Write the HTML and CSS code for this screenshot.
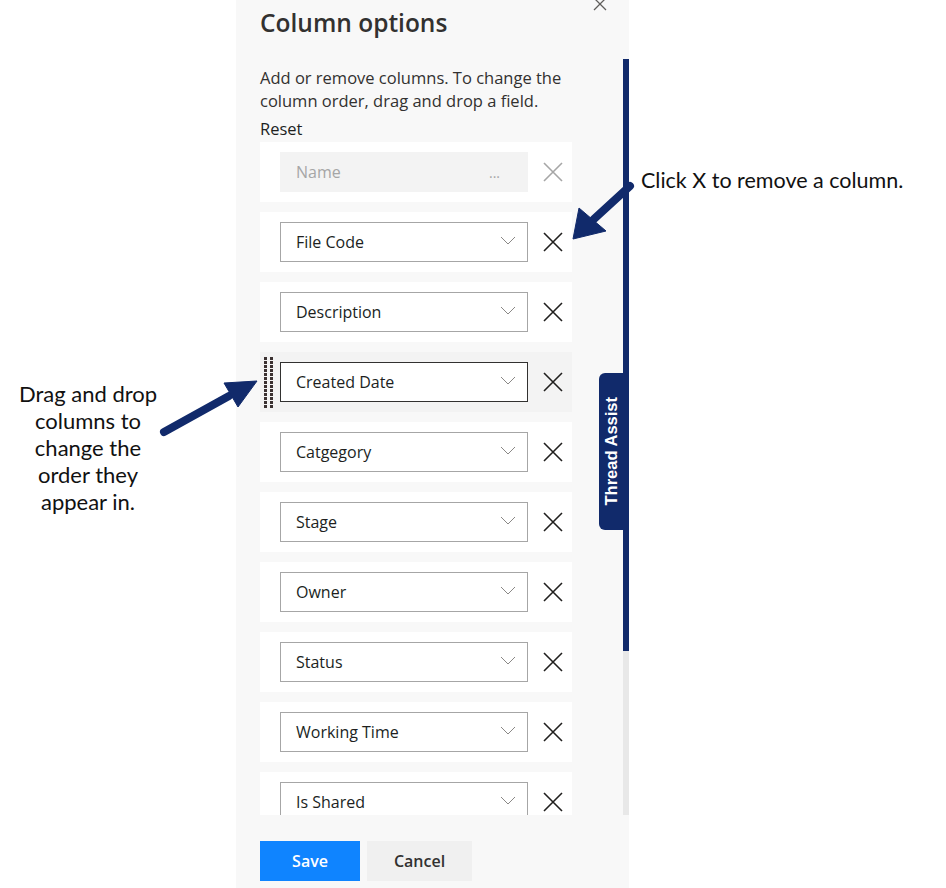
FILE: index.html
```html
<!DOCTYPE html>
<html lang="en">
<head>
    <meta charset="UTF-8">
    <title>Column options</title>
    <link rel="stylesheet" href="styles.css">
</head>
<body>
    <div class="page">
        <aside class="note note-left">
            <p>Drag and drop<br>columns to<br>change the<br>order they<br>appear in.</p>
        </aside>

        <section class="panel">
            <header class="panel-head">
                <h1>Column options</h1>
                <button class="close" aria-label="Close">
                    <svg width="14" height="14" viewBox="0 0 14 14"><path d="M1 1L13 13M13 1L1 13" stroke="#605e5c" stroke-width="1.3" fill="none"/></svg>
                </button>
            </header>

            <div class="panel-body">
                <div class="scroll-content">
                    <p class="intro">Add or remove columns. To change the<br>column order, drag and drop a field.</p>
                    <a class="reset" href="#">Reset</a>

                    <ul class="fields">
                        <li class="field locked">
                            <div class="select"><span>Name</span><span class="dots">...</span></div>
                            <button class="remove"><svg width="20" height="20" viewBox="0 0 20 20"><path d="M1 1L19 19M19 1L1 19" stroke="#a6a6a6" stroke-width="1.6" fill="none"/></svg></button>
                        </li>
                        <li class="field">
                            <div class="select"><span>File Code</span><svg class="chev" width="16" height="9" viewBox="0 0 16 9"><path d="M1 1L8 8L15 1" stroke="#8a8886" stroke-width="1" fill="none"/></svg></div>
                            <button class="remove"><svg width="20" height="20" viewBox="0 0 20 20"><path d="M1 1L19 19M19 1L1 19" stroke="#201f1e" stroke-width="1.6" fill="none"/></svg></button>
                        </li>
                        <li class="field">
                            <div class="select"><span>Description</span><svg class="chev" width="16" height="9" viewBox="0 0 16 9"><path d="M1 1L8 8L15 1" stroke="#8a8886" stroke-width="1" fill="none"/></svg></div>
                            <button class="remove"><svg width="20" height="20" viewBox="0 0 20 20"><path d="M1 1L19 19M19 1L1 19" stroke="#201f1e" stroke-width="1.6" fill="none"/></svg></button>
                        </li>
                        <li class="field dragging">
                            <svg class="grip" width="10" height="52" viewBox="0 0 10 52">
                                <defs>
                                    <pattern id="gripdots" width="6" height="4" patternUnits="userSpaceOnUse">
                                        <rect x="0" y="0" width="3" height="3" fill="#3b3131"/>
                                    </pattern>
                                </defs>
                                <rect width="9" height="52" fill="url(#gripdots)"/>
                            </svg>
                            <div class="select"><span>Created Date</span><svg class="chev" width="16" height="9" viewBox="0 0 16 9"><path d="M1 1L8 8L15 1" stroke="#8a8886" stroke-width="1" fill="none"/></svg></div>
                            <button class="remove"><svg width="20" height="20" viewBox="0 0 20 20"><path d="M1 1L19 19M19 1L1 19" stroke="#201f1e" stroke-width="1.6" fill="none"/></svg></button>
                        </li>
                        <li class="field">
                            <div class="select"><span>Catgegory</span><svg class="chev" width="16" height="9" viewBox="0 0 16 9"><path d="M1 1L8 8L15 1" stroke="#8a8886" stroke-width="1" fill="none"/></svg></div>
                            <button class="remove"><svg width="20" height="20" viewBox="0 0 20 20"><path d="M1 1L19 19M19 1L1 19" stroke="#201f1e" stroke-width="1.6" fill="none"/></svg></button>
                        </li>
                        <li class="field">
                            <div class="select"><span>Stage</span><svg class="chev" width="16" height="9" viewBox="0 0 16 9"><path d="M1 1L8 8L15 1" stroke="#8a8886" stroke-width="1" fill="none"/></svg></div>
                            <button class="remove"><svg width="20" height="20" viewBox="0 0 20 20"><path d="M1 1L19 19M19 1L1 19" stroke="#201f1e" stroke-width="1.6" fill="none"/></svg></button>
                        </li>
                        <li class="field">
                            <div class="select"><span>Owner</span><svg class="chev" width="16" height="9" viewBox="0 0 16 9"><path d="M1 1L8 8L15 1" stroke="#8a8886" stroke-width="1" fill="none"/></svg></div>
                            <button class="remove"><svg width="20" height="20" viewBox="0 0 20 20"><path d="M1 1L19 19M19 1L1 19" stroke="#201f1e" stroke-width="1.6" fill="none"/></svg></button>
                        </li>
                        <li class="field">
                            <div class="select"><span>Status</span><svg class="chev" width="16" height="9" viewBox="0 0 16 9"><path d="M1 1L8 8L15 1" stroke="#8a8886" stroke-width="1" fill="none"/></svg></div>
                            <button class="remove"><svg width="20" height="20" viewBox="0 0 20 20"><path d="M1 1L19 19M19 1L1 19" stroke="#201f1e" stroke-width="1.6" fill="none"/></svg></button>
                        </li>
                        <li class="field">
                            <div class="select"><span>Working Time</span><svg class="chev" width="16" height="9" viewBox="0 0 16 9"><path d="M1 1L8 8L15 1" stroke="#8a8886" stroke-width="1" fill="none"/></svg></div>
                            <button class="remove"><svg width="20" height="20" viewBox="0 0 20 20"><path d="M1 1L19 19M19 1L1 19" stroke="#201f1e" stroke-width="1.6" fill="none"/></svg></button>
                        </li>
                        <li class="field">
                            <div class="select"><span>Is Shared</span><svg class="chev" width="16" height="9" viewBox="0 0 16 9"><path d="M1 1L8 8L15 1" stroke="#8a8886" stroke-width="1" fill="none"/></svg></div>
                            <button class="remove"><svg width="20" height="20" viewBox="0 0 20 20"><path d="M1 1L19 19M19 1L1 19" stroke="#201f1e" stroke-width="1.6" fill="none"/></svg></button>
                        </li>
                    </ul>
                </div>
                <div class="scrollbar"><div class="thumb"></div></div>
            </div>

            <footer class="panel-foot">
                <button class="btn primary">Save</button>
                <button class="btn">Cancel</button>
            </footer>

            <div class="assist-tab"><span>Thread Assist</span></div>
        </section>

        <aside class="note note-right">
            <p>Click X to remove a column.</p>
        </aside>
    </div>

    <!-- callout arrows drawn over the screenshot -->
    <svg class="arrows" width="946" height="888" viewBox="0 0 946 888">
        <g fill="#112a6b" stroke="#112a6b">
            <line x1="630" y1="186" x2="594" y2="219" stroke-width="8" stroke-linecap="round"/>
            <polygon points="573,239 579,208 606,231" stroke-width="1" stroke-linejoin="round"/>
            <line x1="164" y1="432" x2="229" y2="396" stroke-width="8" stroke-linecap="round"/>
            <polygon points="257,381 224,383 238,407" stroke-width="1" stroke-linejoin="round"/>
        </g>
    </svg>
</body>
</html>
```

FILE: styles.css
```css
body {
    margin: 0;
    background-color: #fff;
    font-family: "Open Sans", "Noto Sans", sans-serif;
    color: #323130;
}

.page {
    display: flex;
    height: 888px;
    overflow: hidden;
}

/* annotations */
.note p {
    margin: 0;
    font-family: Lato, "Liberation Sans", sans-serif;
    font-size: 21.5px;
    line-height: 27px;
    color: #111;
}

.note-left {
    width: 236px;
    padding-top: 380px;
    box-sizing: border-box;
}

.note-left p {
    width: 176px;
    font-size: 22px;
    text-align: center;
}

.note-right {
    padding-top: 167px;
    padding-left: 12px;
}

.arrows {
    position: absolute;
    left: 0;
    top: 0;
    pointer-events: none;
}

/* panel */
.panel {
    position: relative;
    width: 393px;
    flex-shrink: 0;
    background-color: #f8f8f8;
    display: flex;
    flex-direction: column;
}

.panel-head {
    height: 59px;
    display: flex;
    align-items: flex-start;
    justify-content: space-between;
    padding-left: 24px;
    box-sizing: border-box;
}

.panel-head h1 {
    margin: 5px 0 0;
    font-size: 24.5px;
    line-height: 36px;
    font-weight: 600;
    color: #323130;
}

.close {
    border: none;
    background: none;
    padding: 0;
    margin: -3px 22px 0 0;
    width: 14px;
    height: 14px;
    display: block;
}

.close svg {
    display: block;
}

.panel-body {
    height: 756px;
    display: flex;
    overflow: hidden;
}

.scroll-content {
    width: 336px;
    padding-left: 24px;
    padding-top: 7px;
    box-sizing: border-box;
}

.intro {
    margin: 0;
    font-size: 16.5px;
    line-height: 23px;
    color: #323130;
}

.reset {
    display: block;
    margin-top: 6px;
    font-size: 16.5px;
    line-height: 22px;
    color: #201f1e;
    text-decoration: none;
}

.fields {
    list-style: none;
    margin: 2px 0 0;
    padding: 0;
    display: flex;
    flex-direction: column;
    gap: 10px;
}

.field {
    position: relative;
    width: 312px;
    height: 60px;
    background-color: #fff;
    display: flex;
    align-items: center;
    padding-left: 20px;
    box-sizing: border-box;
    flex-shrink: 0;
}

.field.dragging {
    background-color: #f3f3f3;
}

.select {
    width: 248px;
    height: 40px;
    box-sizing: border-box;
    border: 1px solid #a6a6a6;
    background-color: #fff;
    display: flex;
    align-items: center;
    justify-content: space-between;
    padding: 0 11px 0 15px;
    font-size: 16px;
    color: #201f1e;
}

.dragging .select {
    border-color: #323130;
}

.chev {
    display: block;
    margin-top: -3px;
}

.locked .select {
    border: none;
    background-color: #f3f3f3;
    color: #a6a6a6;
    padding-left: 16px;
    padding-right: 28px;
}

.locked .dots {
    font-size: 14px;
}

.remove {
    border: none;
    background: none;
    padding: 0;
    margin-left: 15px;
    width: 20px;
    height: 20px;
}

.remove svg {
    display: block;
}

.grip {
    position: absolute;
    left: 4px;
    top: 5px;
}

.scrollbar {
    margin-left: auto;
    width: 6px;
    background-color: #e8e8e8;
}

.thumb {
    height: 592px;
    background-color: #112a6b;
}

.panel-foot {
    flex: 1;
    display: flex;
    gap: 7px;
    padding: 26px 0 0 24px;
    align-items: flex-start;
}

.btn {
    height: 40px;
    width: 105px;
    border: none;
    background-color: #f0f0f0;
    font-family: "Open Sans", "Noto Sans", sans-serif;
    font-size: 16px;
    font-weight: 600;
    color: #323130;
}

.btn.primary {
    width: 100px;
    background-color: #0f84ff;
    color: #fff;
}

.assist-tab {
    position: absolute;
    left: 363px;
    top: 373px;
    width: 24px;
    height: 157px;
    background-color: #112a6b;
    border-radius: 6px 0 0 6px;
    display: flex;
    align-items: center;
    justify-content: center;
}

.assist-tab span {
    writing-mode: vertical-rl;
    transform: rotate(180deg);
    font-family: "Liberation Sans", Arial, sans-serif;
    font-weight: bold;
    font-size: 16.5px;
    color: #fff;
}
```
